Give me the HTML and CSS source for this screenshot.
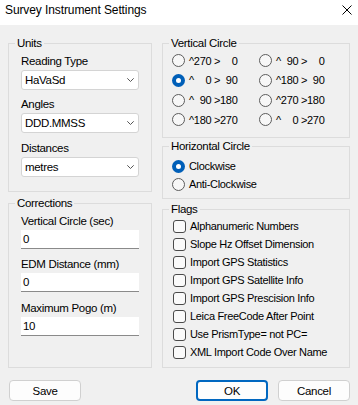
FILE: index.html
```html
<!DOCTYPE html>
<html lang="en">
<head>
<meta charset="utf-8">
<title>Survey Instrument Settings</title>
<link rel="stylesheet" href="styles.css">
</head>
<body>
<div class="dialog">
  <div class="titlebar">
    <span class="title">Survey Instrument Settings</span>
    <svg class="close" width="10" height="10" viewBox="0 0 10 10"><path d="M0.5 0.5L9.5 9.5M9.5 0.5L0.5 9.5" stroke="#000" stroke-width="1" fill="none"/></svg>
  </div>
  <div class="main">
    <div class="col">
      <div class="group units">
        <span class="group-title">Units</span>
        <div class="field">
          <div class="label">Reading Type</div>
          <div class="combo"><span>HaVaSd</span><svg width="7" height="4" viewBox="0 0 7 4"><path d="M0.3 0.3L3.5 3.5L6.7 0.3" stroke="#555" stroke-width="1" fill="none"/></svg></div>
        </div>
        <div class="field">
          <div class="label">Angles</div>
          <div class="combo"><span>DDD.MMSS</span><svg width="7" height="4" viewBox="0 0 7 4"><path d="M0.3 0.3L3.5 3.5L6.7 0.3" stroke="#555" stroke-width="1" fill="none"/></svg></div>
        </div>
        <div class="field">
          <div class="label">Distances</div>
          <div class="combo"><span>metres</span><svg width="7" height="4" viewBox="0 0 7 4"><path d="M0.3 0.3L3.5 3.5L6.7 0.3" stroke="#555" stroke-width="1" fill="none"/></svg></div>
        </div>
      </div>
      <div class="group corrections">
        <span class="group-title">Corrections</span>
        <div class="field">
          <div class="label">Vertical Circle (sec)</div>
          <div class="textbox">0</div>
        </div>
        <div class="field">
          <div class="label">EDM Distance (mm)</div>
          <div class="textbox">0</div>
        </div>
        <div class="field">
          <div class="label">Maximum Pogo (m)</div>
          <div class="textbox">10</div>
        </div>
      </div>
    </div>
    <div class="col">
      <div class="group vcircle">
        <span class="group-title">Vertical Circle</span>
        <div class="radio-grid">
          <div class="opt"><span class="radio"></span><span class="otext">^270 &gt;&#8199;&#8199;0</span></div>
          <div class="opt"><span class="radio"></span><span class="otext">^&#8199;90 &gt;&#8199;&#8199;0</span></div>
          <div class="opt"><span class="radio checked"></span><span class="otext">^&#8199;&#8199;0 &gt;&#8199;90</span></div>
          <div class="opt"><span class="radio"></span><span class="otext">^180 &gt;&#8199;90</span></div>
          <div class="opt"><span class="radio"></span><span class="otext">^&#8199;90 &gt;180</span></div>
          <div class="opt"><span class="radio"></span><span class="otext">^270 &gt;180</span></div>
          <div class="opt"><span class="radio"></span><span class="otext">^180 &gt;270</span></div>
          <div class="opt"><span class="radio"></span><span class="otext">^&#8199;&#8199;0 &gt;270</span></div>
        </div>
      </div>
      <div class="group hcircle">
        <span class="group-title">Horizontal Circle</span>
        <div class="opt row18"><span class="radio checked"></span><span class="otext">Clockwise</span></div>
        <div class="opt row18"><span class="radio"></span><span class="otext">Anti-Clockwise</span></div>
      </div>
      <div class="group flags">
        <span class="group-title">Flags</span>
        <div class="opt row18"><span class="check"></span><span class="otext">Alphanumeric Numbers</span></div>
        <div class="opt row18"><span class="check"></span><span class="otext">Slope Hz Offset Dimension</span></div>
        <div class="opt row18"><span class="check"></span><span class="otext">Import GPS Statistics</span></div>
        <div class="opt row18"><span class="check"></span><span class="otext">Import GPS Satellite Info</span></div>
        <div class="opt row18"><span class="check"></span><span class="otext">Import GPS Prescision Info</span></div>
        <div class="opt row18"><span class="check"></span><span class="otext">Leica FreeCode After Point</span></div>
        <div class="opt row18"><span class="check"></span><span class="otext">Use PrismType= not PC=</span></div>
        <div class="opt row18"><span class="check"></span><span class="otext">XML Import Code Over Name</span></div>
      </div>
    </div>
  </div>
  <div class="buttons">
    <div class="btn">Save</div>
    <div class="right-btns">
      <div class="btn default">OK</div>
      <div class="btn">Cancel</div>
    </div>
  </div>
</div>
</body>
</html>
```

FILE: styles.css
```css
* { box-sizing: border-box; }

html, body {
  margin: 0;
  padding: 0;
}

body {
  width: 358px;
  height: 405px;
  background: #f0f0f0;
  font-family: "Liberation Sans", Arial, sans-serif;
  font-size: 11px;
  letter-spacing: -0.32px;
  line-height: 14px;
  color: #000;
  overflow: hidden;
}

.titlebar {
  height: 25px;
  background: #fff;
  display: flex;
  justify-content: space-between;
  align-items: flex-start;
  padding: 3px 6px 0 5px;
}

.title {
  font-size: 12px;
  letter-spacing: -0.1px;
  line-height: 14px;
}

.close {
  display: block;
  margin-top: 2px;
}

.main {
  display: grid;
  grid-template-columns: 144px 188px;
  column-gap: 10px;
  padding: 18px 8px 0 8px;
}

.col {
  display: flex;
  flex-direction: column;
}

.group {
  position: relative;
  border: 1px solid #dcdcdc;
}

.group-title {
  position: absolute;
  top: -8px;
  left: 6px;
  padding: 0 2px;
  background: #f0f0f0;
  line-height: 14px;
  font-size: 11.5px;
}

.units {
  height: 149px;
  padding: 10px 12px 0 12px;
}

.corrections {
  height: 165px;
  margin-top: 11px;
  padding: 10px 12px 0 12px;
}

.label {
  line-height: 14px;
  margin-bottom: 2px;
  font-size: 11.5px;
}

.units .field + .field { margin-top: 7px; }
.units .field:last-child { margin-top: 8px; }

.combo {
  height: 20px;
  background: #fff;
  border: 1px solid #d4d4d4;
  border-radius: 3px;
  display: flex;
  align-items: center;
  justify-content: space-between;
  padding: 0 4px 0 3px;
  font-size: 11.5px;
}

.combo svg {
  display: block;
}

.textbox {
  height: 19px;
  background: #fff;
  border-bottom: 1px solid #8a8a8a;
  padding: 2px 0 0 2px;
  font-size: 11.5px;
}

.corrections .field + .field { margin-top: 8px; }
.corrections .field:last-child { margin-top: 9px; }

.vcircle {
  height: 95px;
  padding: 7px 0 0 9px;
}

.radio-grid {
  display: grid;
  grid-template-columns: 87px auto;
  grid-auto-rows: 19.67px;
}

.opt {
  display: flex;
  align-items: center;
  white-space: pre;
}

.row18 { height: 18px; }

.radio {
  width: 13px;
  height: 13px;
  border-radius: 50%;
  border: 1px solid #5c5c5c;
  background: #f7f7f7;
  margin-right: 4px;
  flex: none;
  position: relative;
}

.radio.checked {
  border: none;
  background: #005fb8;
}

.radio.checked::after {
  content: "";
  position: absolute;
  left: 4px;
  top: 4px;
  width: 5px;
  height: 5px;
  border-radius: 50%;
  background: #fff;
}

.check {
  width: 13px;
  height: 13px;
  border: 1px solid #4a4a4a;
  border-radius: 3px;
  background: #fafafa;
  margin-right: 4px;
  flex: none;
}

.hcircle {
  height: 53px;
  margin-top: 8px;
  padding: 10px 0 0 9px;
}

.flags {
  height: 159px;
  margin-top: 10px;
  padding: 7px 0 0 10px;
}

.buttons {
  display: flex;
  justify-content: space-between;
  padding: 12px 8px 0 9px;
}

.right-btns {
  display: flex;
  gap: 10px;
}

.btn {
  width: 72px;
  height: 21px;
  border: 1px solid #d0d0d0;
  border-radius: 4px;
  background: #fdfdfd;
  display: flex;
  align-items: center;
  justify-content: center;
  font-size: 11.5px;
}

.btn.default {
  border: 2px solid #0067c0;
}
```
